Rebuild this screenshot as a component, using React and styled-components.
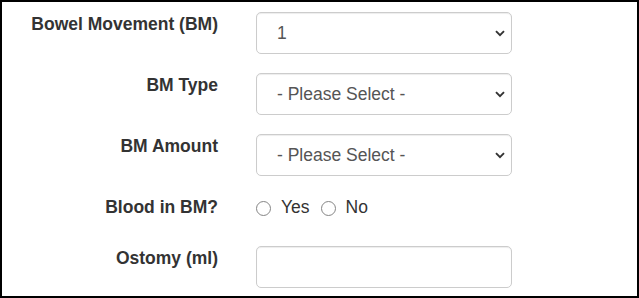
import React from "react";
import styled, { createGlobalStyle } from "styled-components";

const Global = createGlobalStyle`
  html, body { margin: 0; padding: 0; background: #fff; }
  body { font-family: "Liberation Sans", Arial, sans-serif; }
  * { box-sizing: border-box; }
`;

const Frame = styled.div`
  width: 639px;
  height: 298px;
  border: 2px solid #000;
  padding-top: 10px;
  font-family: "Liberation Sans", Arial, sans-serif;
  font-size: 17.5px;
  color: #333;
`;

const Form = styled.form`
  display: flex;
  flex-direction: column;
  gap: 19px;
  margin: 0;
`;

const Row = styled.div`
  display: grid;
  grid-template-columns: 216px 256px;
  column-gap: 38px;
  align-items: start;
  height: ${(p) => p.$h}px;
`;

const Label = styled.label`
  font-weight: bold;
  text-align: right;
  line-height: 25px;
  color: #333;
  white-space: nowrap;
`;

const SelectWrap = styled.div`
  position: relative;
  width: 256px;
  height: 42px;
`;

const Select = styled.select`
  appearance: none;
  -webkit-appearance: none;
  width: 100%;
  height: 42px;
  margin: 0;
  padding: 0 30px 0 20px;
  border: 1px solid #ccc;
  border-radius: 5px;
  background: #fff;
  box-shadow: inset 0 1px 1px rgba(0, 0, 0, 0.075);
  font-family: "Liberation Sans", Arial, sans-serif;
  font-size: 17.5px;
  color: #555;
  outline: none;
`;

const Chevron = styled.svg`
  position: absolute;
  right: 7px;
  top: 18px;
  width: 10px;
  height: 7px;
  pointer-events: none;
`;

const TextInput = styled.input`
  width: 256px;
  height: 42px;
  margin: 0;
  padding: 0 15px;
  border: 1px solid #ccc;
  border-radius: 5px;
  background: #fff;
  box-shadow: inset 0 1px 1px rgba(0, 0, 0, 0.075);
  font-family: "Liberation Sans", Arial, sans-serif;
  font-size: 17.5px;
  color: #555;
  outline: none;
`;

const Options = styled.div`
  display: flex;
  align-items: flex-start;
  gap: 11px;
  line-height: 25px;
`;

const Option = styled.label`
  display: flex;
  align-items: flex-start;
  gap: 10px;
  color: #333;
`;

const RadioCircle = styled.span`
  display: block;
  width: 15px;
  height: 15px;
  margin-top: 6px;
  border: 1px solid #858585;
  border-radius: 50%;
  background: #fff;
`;

const Dropdown = ({ value }) => (
  <SelectWrap>
    <Select defaultValue={value}>
      <option>{value}</option>
    </Select>
    <Chevron viewBox="0 0 10 7">
      <path d="M1 1.2 L5 5.2 L9 1.2" fill="none" stroke="#333" strokeWidth="1.9" />
    </Chevron>
  </SelectWrap>
);

export default function App() {
  return (
    <>
      <Global />
      <Frame>
        <Form>
          <Row $h={42}>
            <Label>Bowel Movement (BM)</Label>
            <Dropdown value="1" />
          </Row>
          <Row $h={42}>
            <Label>BM Type</Label>
            <Dropdown value="- Please Select -" />
          </Row>
          <Row $h={42}>
            <Label>BM Amount</Label>
            <Dropdown value="- Please Select -" />
          </Row>
          <Row $h={32}>
            <Label>Blood in BM?</Label>
            <Options>
              <Option>
                <RadioCircle />
                Yes
              </Option>
              <Option>
                <RadioCircle />
                No
              </Option>
            </Options>
          </Row>
          <Row $h={42}>
            <Label>Ostomy (ml)</Label>
            <TextInput type="text" />
          </Row>
        </Form>
      </Frame>
    </>
  );
}
